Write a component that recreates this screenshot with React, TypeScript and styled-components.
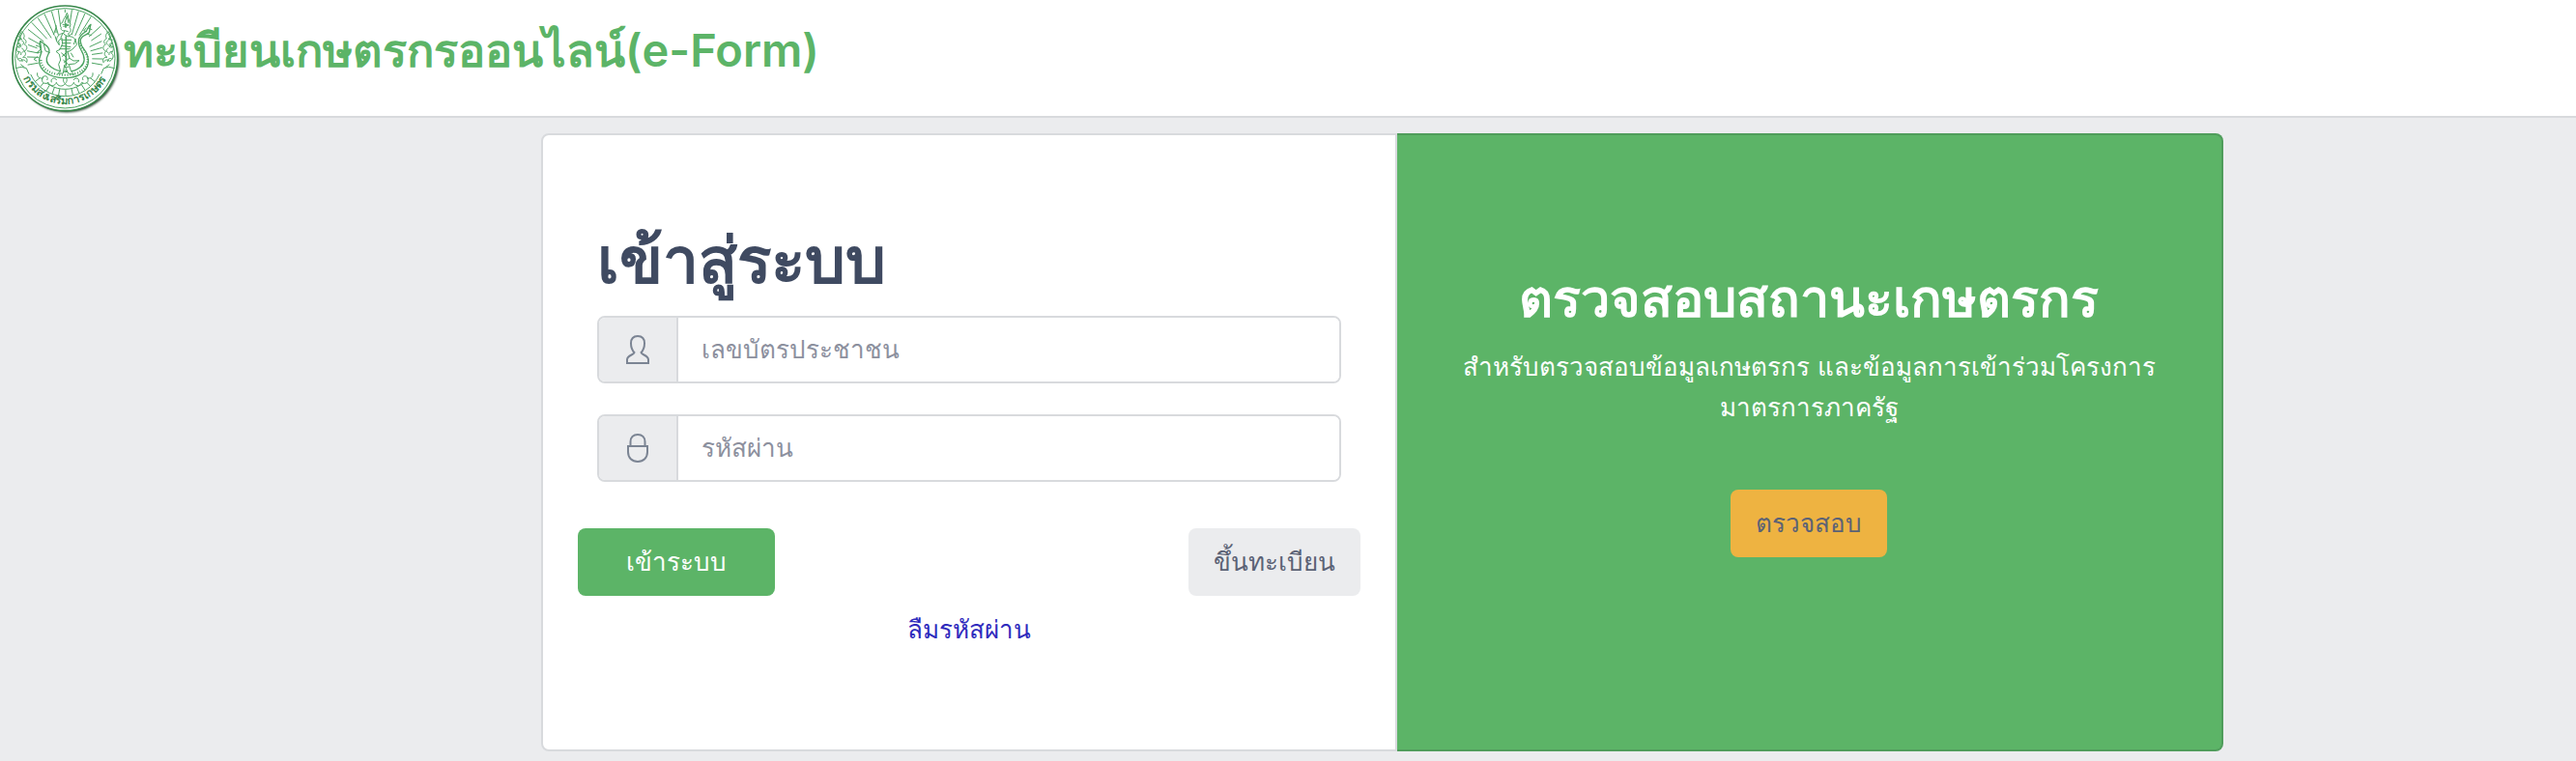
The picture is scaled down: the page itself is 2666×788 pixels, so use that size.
import React from 'react';
import styled, { createGlobalStyle, css } from 'styled-components';

const colors = {
  page: '#ebecee',
  line: '#d8dadd',
  green: '#5cb467',
  greenDark: '#4f9d5b',
  heading: '#3f4a61',
  text: '#5b6275',
  muted: '#8c909e',
  icon: '#7b8493',
  amber: '#eeb341',
  link: '#2f2bbd',
};

const GlobalStyle = createGlobalStyle`
  *, *::before, *::after { box-sizing: border-box; }
  body {
    margin: 0;
    background: ${colors.page};
    color: ${colors.text};
    font-family: Inter, "Noto Sans", sans-serif;
    font-size: 26px;
    line-height: 42px;
  }
`;

const Header = styled.header`
  display: flex;
  align-items: flex-start;
  height: 122px;
  padding-left: 8px;
  background: #fff;
  border-bottom: 2px solid ${colors.line};
`;

const Emblem = styled.svg`
  flex: none;
  width: 120px;
  height: 120px;
`;

const SiteTitle = styled.h1`
  margin: 0;
  padding-top: 20px;
  color: ${colors.green};
  font-size: 47px;
  font-weight: 600;
  line-height: 64px;
  white-space: nowrap;
`;

const Main = styled.main`
  padding: 16px 13.7% 10px 21%;
`;

const CardGroup = styled.div`
  display: flex;
  min-height: 640px;
`;

const cardBase = css`
  display: flex;
  flex-direction: column;
  justify-content: center;
  min-width: 0;
`;

const LoginCard = styled.section`
  ${cardBase}
  flex: 887;
  padding: 0 56px 16px;
  background: #fff;
  border: 2px solid ${colors.line};
  border-radius: 8px 0 0 8px;
`;

const StatusCard = styled.section`
  ${cardBase}
  flex: 853;
  align-items: center;
  padding: 0 56px 64px;
  color: #fff;
  text-align: center;
  background: ${colors.green};
  border: 2px solid ${colors.greenDark};
  border-left: 0;
  border-radius: 0 8px 8px 0;
`;

const LoginTitle = styled.h2`
  margin: 0 0 16px;
  color: ${colors.heading};
  font-size: 66px;
  font-weight: 600;
  line-height: 84px;
`;

const StatusTitle = styled.h2`
  margin: 0 0 16px;
  font-size: 54px;
  font-weight: 600;
  line-height: 68px;
`;

const StatusText = styled.p`
  margin: 0 0 64px;
`;

const InputGroup = styled.div`
  display: flex;
  height: 70px;
  margin-bottom: 32px;
  overflow: hidden;
  border: 2px solid ${colors.line};
  border-radius: 8px;
`;

const Addon = styled.label`
  display: flex;
  flex: none;
  align-items: center;
  justify-content: center;
  width: 82px;
  background: ${colors.page};
  border-right: 2px solid ${colors.line};
`;

const AddonIcon = styled.svg`
  width: 28px;
  height: 32px;
  fill: none;
  stroke: ${colors.icon};
  stroke-width: 2;
`;

const Field = styled.input`
  flex: 1;
  min-width: 0;
  padding: 0 24px;
  color: ${colors.text};
  font: inherit;
  background: #fff;
  border: 0;
  outline: 0;
  &::placeholder { color: ${colors.muted}; opacity: 1; }
`;

const Actions = styled.div`
  display: flex;
  justify-content: space-between;
  margin: 16px -20px 14px;
`;

const Button = styled.button<{ $tone: 'green' | 'light' | 'amber'; $wide?: boolean }>`
  height: 70px;
  padding: 0 ${p => (p.$wide ? 50 : 26)}px;
  color: ${p => (p.$tone === 'green' ? '#fff' : colors.text)};
  font: inherit;
  background: ${p => (p.$tone === 'light' ? colors.page : colors[p.$tone])};
  border: 0;
  border-radius: 8px;
  cursor: pointer;
`;

const ForgotLink = styled.a`
  align-self: center;
  color: ${colors.link};
  text-decoration: none;
`;

const CENTER = { x: 178, y: 181 };

const point = (degrees: number, radius: number) => {
  const angle = (degrees * Math.PI) / 180;
  return `${(CENTER.x + radius * Math.cos(angle)).toFixed(1)} ${(CENTER.y + radius * Math.sin(angle)).toFixed(1)}`;
};

// Sun rays: angle, inner radius, outer radius
const RAYS: [number, number, number][] = [
  [-178, 82, 118], [-169, 84, 120], [-160, 92, 122], [-151, 84, 130], [-142, 84, 146], [-133, 82, 152],
  [-124, 76, 152], [-115, 78, 152], [-106, 74, 152], [-98, 100, 152], [-90, 142, 152], [-82, 100, 152],
  [-74, 76, 152], [-66, 76, 152], [-58, 84, 152], [-42, 100, 150], [-34, 98, 136],
  [-25, 84, 126], [-16, 82, 120], [-8, 84, 118], [1, 84, 118], [10, 84, 118], [170, 84, 118],
];

const BRICKS = [38, 48, 58, 68, 78, 89, 100, 110, 120, 131, 142];

const SideOrnament = () => (
  <path d="M44 98c-8 10-8 18 0 24c-13 0-16 12-5 20c-13 2-15 14-3 22c-11 5-9 20 3 26c7-7 14-5 20 4c4-12-3-17-12-16c8-4 12-12 4-19c10-3 12-16 1-21c8-6 6-14-3-18c4-7 3-14-5-22M34 112l6 10l-10 2M28 138c7-7 15-2 13 7c-6 5-12 2-11-3M43 126c8 2 9 10 2 13M29 162c8-5 14 1 12 9M43 150c8 2 8 11 1 14M32 184c7-6 14-1 13 8M40 200l12 9" />
);

function Logo() {
  return (
    <Emblem viewBox="0 0 360 360" role="img" aria-label="กรมส่งเสริมการเกษตร">
      <defs>
        <filter id="emblem-shadow" x="-10%" y="-10%" width="125%" height="125%">
          <feGaussianBlur stdDeviation="3" />
        </filter>
        <path id="motto-arc" d={`M${point(172, 143)}A143 143 0 0 0 ${point(8, 143)}`} />
      </defs>
      <circle cx="183" cy="187" r="162" fill="#2a4630" filter="url(#emblem-shadow)" />
      <circle cx={CENTER.x} cy={CENTER.y} r="163" fill="#fff" stroke="#37874a" strokeWidth="5" />
      <g fill="none" stroke="#4ba361" strokeWidth="3" strokeLinejoin="round">
        <circle cx={CENTER.x} cy={CENTER.y} r="155" />
        {RAYS.map(([a, from, to]) => (
          <path key={a} d={`M${point(a, from)}L${point(a, to)}`} />
        ))}

        <SideOrnament />
        <g transform="translate(356 0) scale(-1 1)">
          <SideOrnament />
        </g>

        {/* ribbon and masonry arc */}
        <path d={`M24 212Q44 204 58 212L66 230M332 212Q312 204 298 212L290 230M${point(155, 118)}A118 118 0 0 0 ${point(25, 118)}`} />
        <path d={`M${point(148, 96)}A96 96 0 0 0 ${point(32, 96)}`} />
        {BRICKS.map(a => (
          <path key={a} d={`M${point(a, 97)}L${point(a, 117)}`} />
        ))}

        {/* cloud scrolls */}
        <path d="M92 226c-2 14 8 20 18 15c-10 12 4 24 16 15c5 14 22 12 25 0c4 13 20 15 27 4c7 11 23 9 27-4c3 12 20 14 25 0c12 9 26-3 16-15c10 5 20-1 18-15M108 240c8-8 20-2 14 9M136 256c-5-12 10-18 16-7M178 260c-10-10-4-19 0-19c5 0 10 9 0 19M220 256c5-12-10-18-16-7M248 240c-8-8-20-2-14 9" fill="#fff" />

        {/* naga */}
        <path d="M101 128c-8 18 10 26 1 42c-8 16-6 38 14 54c32 24 92 24 118 0c24-22 18-52 2-72c-12-16-14-29-4-38c8-7 17-7 21-14c3-8 1-16 5-24c-12 7-8 17-17 23c-24 14-26 34-13 57c12 20 14 38-2 52c-22 20-66 20-92 0c-16-12-16-26-8-40c9-16-3-26-25-40Z" fill="#fff" strokeWidth="4" />
        <path d="M103 186c0 30 34 47 75 47c44 0 74-20 70-52c-3-22-26-36-25-54" strokeWidth="7" strokeDasharray="3 5" />
        <path d="M101 128l3 24l-14 12l17-3M112 138l5 20l14 6M98 145l-11-4M246 98l-10-2l8-10M250 88l12 4M248 106l12 4M93 176l-12 8l10 6" />

        {/* deity */}
        <path d="M184 40c-3 12-12 18-14 30c-7 2-9 10-4 15c-3 7 4 12 10 10l-2 8c-16 2-24 12-22 25l8 12l-2-14l10-8l2 18l-8 18l-12 6l10 8l4 18l-6 14l6 22l-8 6h16l4-26l12 26l18 4l-10-12l-6-20l18-2l14-10l-18 1l-12-8l-6-19l14-8l14-15l-4-16c-5-8-14-10-20-10l-2-9c8-3 10-12 4-18l3-10c-2-10-7-14-8-28Z" fill="#fff" />
        <path d="M184 48l-7 24M184 52l5 20M170 76h20M172 82l18-3M176 95l12 3M174 106l14 8l10-10M166 124h32M168 134h28M166 142l30 4M160 152h34M166 164l18 16M188 158l-20 18M172 186l16 14M192 180l-18 14M176 208h14M176 218l10 4M152 128l-5-16M211 120l-6 18M150 78v24M150 86l-8 22M196 164l8 14M172 102l-8 16" />
        <path d="M180 72v14M181 112v92" strokeWidth="5" />
      </g>
      <text fill="#37874a" fontSize="33" fontWeight="600" textAnchor="middle">
        <textPath href="#motto-arc" startOffset="50%">กรมส่งเสริมการเกษตร</textPath>
      </text>
    </Emblem>
  );
}

export default function App() {
  return (
    <>
      <GlobalStyle />
      <Header>
        <Logo />
        <SiteTitle>ทะเบียนเกษตรกรออนไลน์(e-Form)</SiteTitle>
      </Header>
      <Main>
        <CardGroup>
          <LoginCard>
            <LoginTitle>เข้าสู่ระบบ</LoginTitle>
            <InputGroup>
              <Addon htmlFor="citizen-id" aria-label="เลขบัตรประชาชน">
                <AddonIcon viewBox="0 0 28 32" aria-hidden="true">
                  <path d="M14 2C9.500 2 7 5 7 9.500C7 14 8.500 17 10.500 19C10 21.500 3 22 3 26.500V30H25V26.500C25 22 18 21.500 17.500 19C19.500 17 21 14 21 9.500C21 5 18.500 2 14 2Z" />
                </AddonIcon>
              </Addon>
              <Field id="citizen-id" type="text" placeholder="เลขบัตรประชาชน" />
            </InputGroup>
            <InputGroup>
              <Addon htmlFor="password" aria-label="รหัสผ่าน">
                <AddonIcon viewBox="0 0 28 32" aria-hidden="true">
                  <path d="M6.500 14V9.500C6.500 5 9.500 2 14 2S21.500 5 21.500 9.500V14M4 14H24V20C24 26 20 30 14 30S4 26 4 20Z" />
                </AddonIcon>
              </Addon>
              <Field id="password" type="password" placeholder="รหัสผ่าน" />
            </InputGroup>
            <Actions>
              <Button type="button" $tone="green" $wide>เข้าระบบ</Button>
              <Button type="button" $tone="light">ขึ้นทะเบียน</Button>
            </Actions>
            <ForgotLink href="#forgot">ลืมรหัสผ่าน</ForgotLink>
          </LoginCard>
          <StatusCard>
            <StatusTitle>ตรวจสอบสถานะเกษตรกร</StatusTitle>
            <StatusText>สำหรับตรวจสอบข้อมูลเกษตรกร และข้อมูลการเข้าร่วมโครงการมาตรการภาครัฐ</StatusText>
            <Button type="button" $tone="amber">ตรวจสอบ</Button>
          </StatusCard>
        </CardGroup>
      </Main>
    </>
  );
}
